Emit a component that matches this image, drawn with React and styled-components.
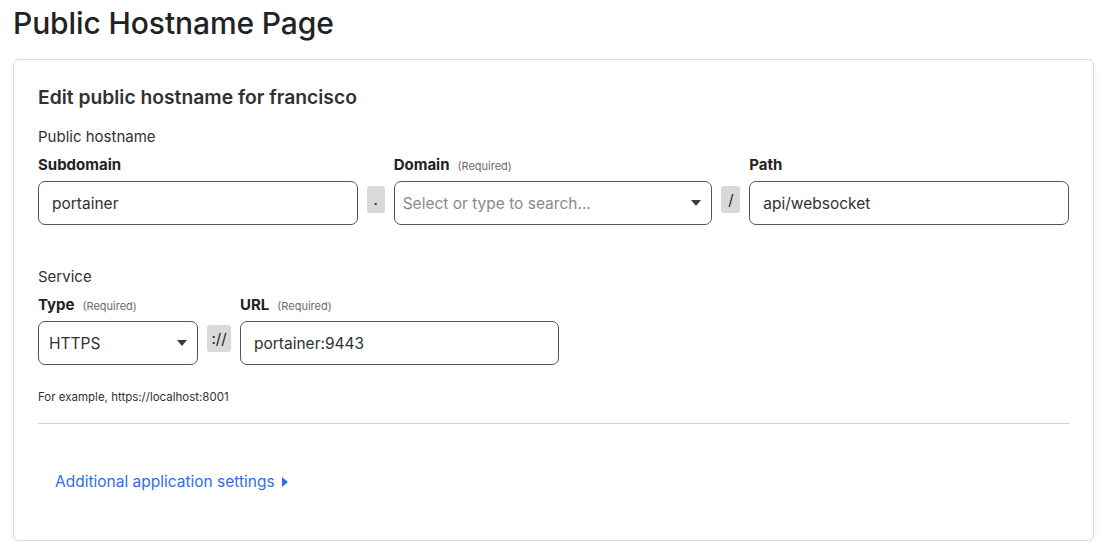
import React from "react";
import styled, { createGlobalStyle } from "styled-components";

const GlobalStyle = createGlobalStyle`
  body {
    margin: 0;
    background: #ffffff;
    font-family: Inter, "Noto Sans", "Liberation Sans", sans-serif;
    color: #313131;
  }
`;

const Page = styled.div`
  padding: 5px 8px 0 13px;
`;

const PageTitle = styled.h1`
  margin: 0 0 18px;
  font-size: 30px;
  line-height: 36px;
  font-weight: 500;
  color: #222222;
  letter-spacing: -0.1px;
`;

const Card = styled.div`
  width: 1081px;
  box-sizing: border-box;
  border: 1px solid #d9d9d9;
  border-radius: 6px;
  padding: 25px 24px 48px;
  box-shadow: 0 2px 6px rgba(0, 0, 0, 0.06);
`;

const CardTitle = styled.h2`
  margin: 0 0 18px;
  font-size: 19.3px;
  line-height: 24px;
  font-weight: 600;
  color: #313131;
`;

const GroupLabel = styled.div`
  font-size: 15px;
  line-height: 20px;
  margin-bottom: 8px;
`;

const FieldRow = styled.div`
  display: flex;
  align-items: flex-start;
  gap: 9px;
`;

const Field = styled.div`
  display: flex;
  flex-direction: column;
  gap: 6px;
  width: ${({ $width }) => $width}px;
`;

const Label = styled.div`
  display: flex;
  align-items: baseline;
  gap: 8px;
  height: 20px;
  font-size: 15px;
  line-height: 20px;
  font-weight: 700;
  color: #222222;
`;

const Required = styled.span`
  font-size: 11px;
  line-height: 14px;
  font-weight: 400;
  color: #6b6b6b;
`;

const Box = styled.div`
  box-sizing: border-box;
  height: 44px;
  border: 1px solid #555555;
  border-radius: 7px;
  display: flex;
  align-items: center;
  justify-content: space-between;
  padding: 0 ${({ $right }) => $right ?? 13}px 0 ${({ $left }) => $left ?? 13}px;
  font-size: 15.5px;
  color: ${({ $placeholder }) => ($placeholder ? "#8a8a8a" : "#313131")};
`;

const Caret = styled.span`
  width: 0;
  height: 0;
  border-left: 5px solid transparent;
  border-right: 5px solid transparent;
  border-top: 6px solid #3a3a3a;
`;

const Separator = styled.div`
  box-sizing: border-box;
  width: ${({ $width }) => $width}px;
  height: 27px;
  margin-top: ${({ $top }) => $top}px;
  background: #d9d9d9;
  border-radius: 3px;
  display: flex;
  align-items: center;
  justify-content: center;
  font-size: 15px;
  color: #222222;
`;

const Section = styled.div`
  margin-top: ${({ $top }) => $top}px;
`;

const Hint = styled.div`
  margin-top: 24px;
  font-size: 11.5px;
  line-height: 16px;
  color: #313131;
`;

const Divider = styled.hr`
  margin: 18px 0 0;
  border: 0;
  border-top: 1px solid #d0d0d0;
`;

const LinkButton = styled.button`
  margin: 48px 0 0 17px;
  padding: 0;
  border: 0;
  background: none;
  display: inline-flex;
  align-items: center;
  gap: 7px;
  font-family: inherit;
  font-size: 15.5px;
  line-height: 20px;
  color: #2f6fe4;
  cursor: pointer;
`;

const RightCaret = styled.span`
  width: 0;
  height: 0;
  border-top: 5px solid transparent;
  border-bottom: 5px solid transparent;
  border-left: 6px solid #2f6fe4;
`;

export default function App() {
  return (
    <>
      <GlobalStyle />
      <Page>
        <PageTitle>Public Hostname Page</PageTitle>
        <Card>
          <CardTitle>Edit public hostname for francisco</CardTitle>

          <GroupLabel>Public hostname</GroupLabel>
          <FieldRow>
            <Field $width={320}>
              <Label>Subdomain</Label>
              <Box>portainer</Box>
            </Field>
            <Separator $width={18} $top={31}>.</Separator>
            <Field $width={319}>
              <Label>
                Domain <Required>(Required)</Required>
              </Label>
              <Box $placeholder $left={8} $right={10}>
                Select or type to search...
                <Caret />
              </Box>
            </Field>
            <Separator $width={19} $top={31}>/</Separator>
            <Field $width={320}>
              <Label>Path</Label>
              <Box>api/websocket</Box>
            </Field>
          </FieldRow>

          <Section $top={42}>
            <GroupLabel>Service</GroupLabel>
            <FieldRow>
              <Field $width={160}>
                <Label>
                  Type <Required>(Required)</Required>
                </Label>
                <Box $left={10} $right={10}>
                  HTTPS
                  <Caret />
                </Box>
              </Field>
              <Separator $width={24} $top={30}>://</Separator>
              <Field $width={319}>
                <Label>
                  URL <Required>(Required)</Required>
                </Label>
                <Box>portainer:9443</Box>
              </Field>
            </FieldRow>
          </Section>

          <Hint>For example, https://localhost:8001</Hint>
          <Divider />
          <LinkButton>
            Additional application settings
            <RightCaret />
          </LinkButton>
        </Card>
      </Page>
    </>
  );
}
